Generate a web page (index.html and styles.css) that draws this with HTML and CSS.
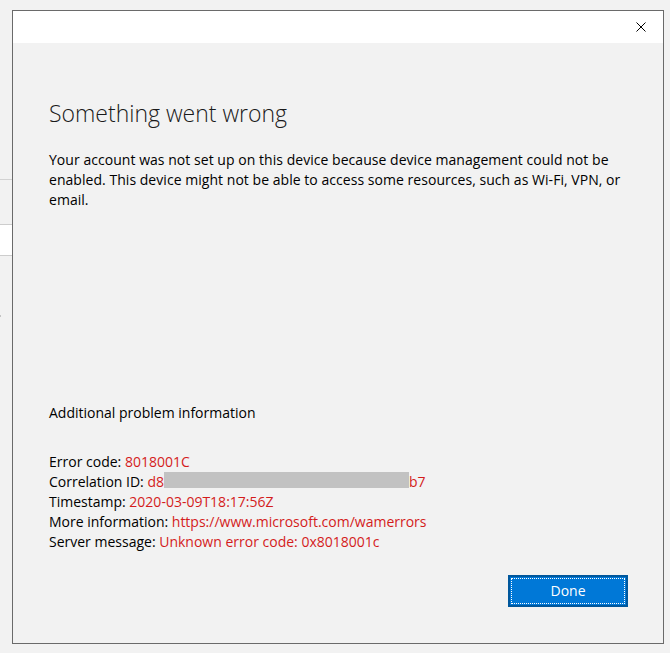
FILE: index.html
```html
<!DOCTYPE html>
<html lang="en">
<head>
<meta charset="utf-8">
<title>Something went wrong</title>
<link rel="stylesheet" href="styles.css">
</head>
<body>
<div class="desktop">
  <div class="backdrop">
    <div class="bd-gap1"></div>
    <div class="bd-line"></div>
    <div class="bd-gap2"></div>
    <div class="bd-field"></div>
    <div class="bd-gap3"></div>
    <div class="bd-tick"></div>
  </div>

  <div class="dialog">
    <div class="titlebar">
      <svg class="close" width="10" height="10" viewBox="0 0 10 10" aria-label="Close">
        <path d="M0.5 0.5 L9.5 9.5 M9.5 0.5 L0.5 9.5" stroke="#000" stroke-width="1" fill="none"/>
      </svg>
    </div>
    <div class="content">
      <h1 class="title">Something went wrong</h1>
      <p class="message">Your account was not set up on this device because device management could not be enabled. This device might not be able to access some resources, such as Wi-Fi, VPN, or email.</p>

      <div class="details">
        <div class="details-heading">Additional problem information</div>
        <div class="details-list">
          <div class="row">Error code: <span class="val">8018001C</span></div>
          <div class="row">Correlation ID: <span class="val">d8</span><span class="redact"></span><span class="val">b7</span></div>
          <div class="row">Timestamp: <span class="val">2020-03-09T18:17:56Z</span></div>
          <div class="row">More information: <span class="val">https://www.microsoft.com/wamerrors</span></div>
          <div class="row">Server message: <span class="val">Unknown error code: 0x8018001c</span></div>
        </div>
        <div class="actions">
          <button class="btn-done" type="button">Done</button>
        </div>
      </div>
    </div>
  </div>
</div>
</body>
</html>
```

FILE: styles.css
```css
html, body {
  margin: 0;
  padding: 0;
}

body {
  width: 670px;
  height: 653px;
  background: #f2f2f2;
  font-family: "Open Sans", "Noto Sans", "Liberation Sans", sans-serif;
  color: #000;
  overflow: hidden;
}

.desktop {
  position: relative;
  width: 670px;
  height: 653px;
}

/* window behind the dialog */
.backdrop {
  display: flex;
  flex-direction: column;
  width: 12px;
}
.bd-gap1 { height: 179px; }
.bd-line { height: 1px; background: #d2d2d2; }
.bd-gap2 { height: 44px; }
.bd-field {
  height: 30px;
  background: #ffffff;
  border-top: 1px solid #cdcdcd;
  border-bottom: 1px solid #cdcdcd;
}
.bd-gap3 { height: 59px; }
.bd-tick { height: 2px; width: 1px; background: #c4c4c4; }

/* dialog window */
.dialog {
  position: absolute;
  left: 12px;
  top: 10px;
  width: 650px;
  height: 632px;
  border: 1px solid #6a6a6a;
  background: #f2f2f2;
  display: flex;
  flex-direction: column;
}

.titlebar {
  height: 32px;
  background: #ffffff;
  display: flex;
  align-items: center;
  justify-content: flex-end;
  padding-right: 17px;
  flex: none;
}

.close {
  display: block;
}

.content {
  flex: 1;
  display: flex;
  flex-direction: column;
  padding: 0 35px 36px 36px;
}

.title {
  margin: 54px 0 0 0;
  font-size: 23px;
  font-weight: 300;
  line-height: 32px;
  color: #1a1a1a;
  letter-spacing: 0;
}

.message {
  margin: 21px 0 0 0;
  font-size: 14px;
  line-height: 20px;
  letter-spacing: 0.04px;
}

.details {
  margin-top: auto;
  display: flex;
  flex-direction: column;
}

.details-heading,
.row {
  font-size: 14px;
  line-height: 20px;
  letter-spacing: 0;
  white-space: nowrap;
}

.details-list {
  margin-top: 29px;
}

.val {
  color: #d41c1c;
}

.redact {
  display: inline-block;
  vertical-align: top;
  width: 245px;
  height: 16px;
  background: #c2c2c2;
}

.actions {
  margin-top: 23px;
  display: flex;
  justify-content: flex-end;
}

.btn-done {
  width: 120px;
  height: 32px;
  margin: 0;
  padding: 0 0 2px 0;
  border: 2px solid #00579c;
  background: #0078d7;
  color: #ffffff;
  font-family: inherit;
  font-size: 14px;
  outline: 1px dotted #ffffff;
  outline-offset: -4px;
}
```
